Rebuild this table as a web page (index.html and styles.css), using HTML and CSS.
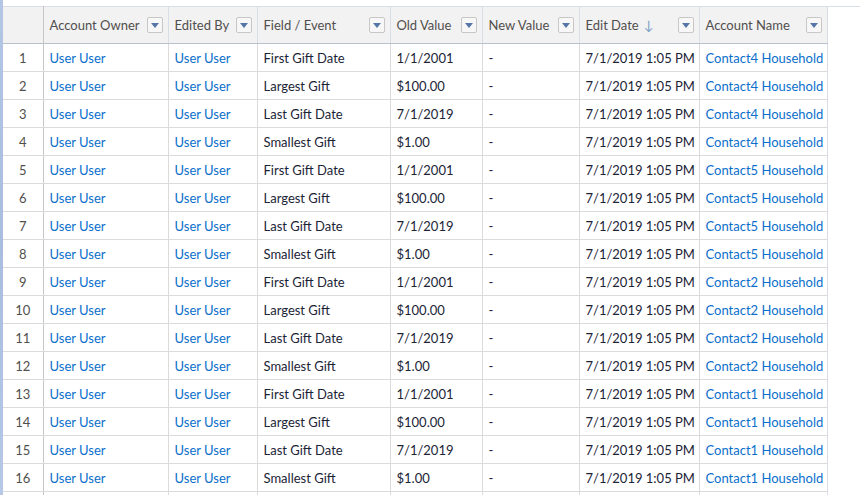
FILE: index.html
```html
<!DOCTYPE html>
<html>
<head>
<meta charset="utf-8">
<link rel="stylesheet" href="styles.css">
</head>
<body>
<div class="page">
  <div class="strip"></div>
  <div class="main">
    <table class="grid">
      <colgroup>
        <col class="c-num"><col class="c-owner"><col class="c-edited"><col class="c-field"><col class="c-old"><col class="c-new"><col class="c-date"><col class="c-acct">
      </colgroup>
      <thead>
        <tr>
          <th class="num"></th>
          <th><div class="hd"><span>Account Owner</span><span class="dd"></span></div></th>
          <th><div class="hd"><span>Edited By</span><span class="dd"></span></div></th>
          <th><div class="hd"><span>Field / Event</span><span class="dd"></span></div></th>
          <th><div class="hd"><span>Old Value</span><span class="dd"></span></div></th>
          <th><div class="hd"><span>New Value</span><span class="dd"></span></div></th>
          <th><div class="hd"><span>Edit Date <span class="sort">↓</span></span><span class="dd"></span></div></th>
          <th><div class="hd"><span>Account Name</span><span class="dd"></span></div></th>
        </tr>
      </thead>
      <tbody id="rows">
        <tr><td class="num">1</td><td><a>User User</a></td><td><a>User User</a></td><td>First Gift Date</td><td>1/1/2001</td><td>-</td><td>7/1/2019 1:05 PM</td><td><a>Contact4 Household</a></td></tr>
        <tr><td class="num">2</td><td><a>User User</a></td><td><a>User User</a></td><td>Largest Gift</td><td>$100.00</td><td>-</td><td>7/1/2019 1:05 PM</td><td><a>Contact4 Household</a></td></tr>
        <tr><td class="num">3</td><td><a>User User</a></td><td><a>User User</a></td><td>Last Gift Date</td><td>7/1/2019</td><td>-</td><td>7/1/2019 1:05 PM</td><td><a>Contact4 Household</a></td></tr>
        <tr><td class="num">4</td><td><a>User User</a></td><td><a>User User</a></td><td>Smallest Gift</td><td>$1.00</td><td>-</td><td>7/1/2019 1:05 PM</td><td><a>Contact4 Household</a></td></tr>
        <tr><td class="num">5</td><td><a>User User</a></td><td><a>User User</a></td><td>First Gift Date</td><td>1/1/2001</td><td>-</td><td>7/1/2019 1:05 PM</td><td><a>Contact5 Household</a></td></tr>
        <tr><td class="num">6</td><td><a>User User</a></td><td><a>User User</a></td><td>Largest Gift</td><td>$100.00</td><td>-</td><td>7/1/2019 1:05 PM</td><td><a>Contact5 Household</a></td></tr>
        <tr><td class="num">7</td><td><a>User User</a></td><td><a>User User</a></td><td>Last Gift Date</td><td>7/1/2019</td><td>-</td><td>7/1/2019 1:05 PM</td><td><a>Contact5 Household</a></td></tr>
        <tr><td class="num">8</td><td><a>User User</a></td><td><a>User User</a></td><td>Smallest Gift</td><td>$1.00</td><td>-</td><td>7/1/2019 1:05 PM</td><td><a>Contact5 Household</a></td></tr>
        <tr><td class="num">9</td><td><a>User User</a></td><td><a>User User</a></td><td>First Gift Date</td><td>1/1/2001</td><td>-</td><td>7/1/2019 1:05 PM</td><td><a>Contact2 Household</a></td></tr>
        <tr><td class="num">10</td><td><a>User User</a></td><td><a>User User</a></td><td>Largest Gift</td><td>$100.00</td><td>-</td><td>7/1/2019 1:05 PM</td><td><a>Contact2 Household</a></td></tr>
        <tr><td class="num">11</td><td><a>User User</a></td><td><a>User User</a></td><td>Last Gift Date</td><td>7/1/2019</td><td>-</td><td>7/1/2019 1:05 PM</td><td><a>Contact2 Household</a></td></tr>
        <tr><td class="num">12</td><td><a>User User</a></td><td><a>User User</a></td><td>Smallest Gift</td><td>$1.00</td><td>-</td><td>7/1/2019 1:05 PM</td><td><a>Contact2 Household</a></td></tr>
        <tr><td class="num">13</td><td><a>User User</a></td><td><a>User User</a></td><td>First Gift Date</td><td>1/1/2001</td><td>-</td><td>7/1/2019 1:05 PM</td><td><a>Contact1 Household</a></td></tr>
        <tr><td class="num">14</td><td><a>User User</a></td><td><a>User User</a></td><td>Largest Gift</td><td>$100.00</td><td>-</td><td>7/1/2019 1:05 PM</td><td><a>Contact1 Household</a></td></tr>
        <tr><td class="num">15</td><td><a>User User</a></td><td><a>User User</a></td><td>Last Gift Date</td><td>7/1/2019</td><td>-</td><td>7/1/2019 1:05 PM</td><td><a>Contact1 Household</a></td></tr>
        <tr><td class="num">16</td><td><a>User User</a></td><td><a>User User</a></td><td>Smallest Gift</td><td>$1.00</td><td>-</td><td>7/1/2019 1:05 PM</td><td><a>Contact1 Household</a></td></tr>
        <tr class="last"><td class="num"></td><td></td><td></td><td></td><td></td><td></td><td></td><td></td></tr>
      </tbody>
    </table>
  </div>
</div>
</body>
</html>
```

FILE: styles.css
```css
html, body {
  margin: 0;
  padding: 0;
  background: #ffffff;
  overflow: hidden;
}
body {
  font-family: "Lato", "Liberation Sans", sans-serif;
  font-size: 13px;
  color: #16325c;
}
.page {
  display: flex;
  width: 860px;
  height: 495px;
}
.strip {
  width: 3px;
  flex: none;
  background: linear-gradient(180deg, #b4c6e4 0%, #a9bde0 50%, #b7c8e6 100%);
}
.main {
  flex: 1;
  padding-top: 6px;
  border-top: 0;
  position: relative;
  background: linear-gradient(#d8dde6, #d8dde6) no-repeat 0 6px / 100% 1px;
}
.grid {
  border-collapse: collapse;
  table-layout: fixed;
  width: 824px;
  border-right: 1px solid #d8dde6;
}
.c-num { width: 40px; }
.c-owner { width: 125px; }
.c-edited { width: 89px; }
.c-field { width: 133px; }
.c-old { width: 92px; }
.c-new { width: 97px; }
.c-date { width: 120px; }
.c-acct { width: 128px; }

th {
  height: 36px;
  padding: 0;
  background: #f3f2f2;
  border-top: 1px solid #d8dde6;
  border-bottom: 1px solid #b8c1cf;
  border-left: 1px solid #d8dde6;
  font-weight: normal;
  text-align: left;
  color: #514f4d;
  font-size: 13px;
}
th.num {
  border-left: 0;
  border-right: 1px solid #c9c7c5;
}
.hd {
  display: flex;
  align-items: center;
  justify-content: space-between;
  padding: 0 5px 0 6px;
  white-space: nowrap;
}
.sort {
  color: #7a9cc6;
  margin-left: 2px;
}
.dd {
  width: 14px;
  height: 14px;
  border: 1px solid #c9c7c5;
  border-radius: 2px;
  background: #f7f7f7;
  display: flex;
  align-items: center;
  justify-content: center;
  flex: none;
}
.dd::after {
  content: "";
  width: 0;
  height: 0;
  border-left: 4px solid transparent;
  border-right: 4px solid transparent;
  border-top: 5px solid #5576a7;
  margin-top: 1px;
}
td {
  height: 27px;
  padding: 0 0 0 6px;
  border-bottom: 1px solid #dddbda;
  border-left: 1px solid #dddbda;
  white-space: nowrap;
  overflow: hidden;
  color: #1b2436;
}
td.num {
  border-left: 0;
  border-right: 1px solid #c9c7c5;
  text-align: center;
  padding: 0;
  color: #514f4d;
}
td a {
  color: #0b6fcb;
  text-decoration: none;
}
tr.last td {
  border-bottom: 0;
}
```
